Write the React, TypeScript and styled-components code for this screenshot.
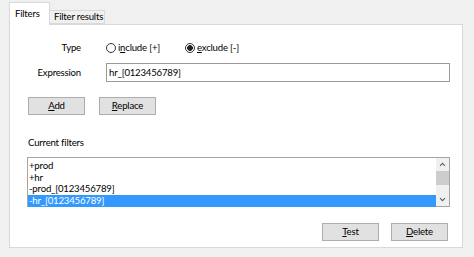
import React from 'react'
import styled, { createGlobalStyle } from 'styled-components'

const GlobalStyle = createGlobalStyle`
  html, body {
    margin: 0;
    padding: 0;
    background: #f0f0f0;
  }
  body {
    font-family: Lato, 'Noto Sans', sans-serif;
    font-size: 9.6px;
    letter-spacing: -0.2px;
    color: #000;
  }
`

const filters = ['+prod', '+hr', '-prod_[0123456789]', '-hr_[0123456789]']

const Chevron = ({ down }: { down?: boolean }) => (
  <svg width="7" height="5" viewBox="0 0 7 5">
    <path
      d={down ? 'M1 1.2 L3.5 3.7 L6 1.2' : 'M1 3.8 L3.5 1.3 L6 3.8'}
      fill="none"
      stroke="#606060"
      strokeWidth="1.1"
    />
  </svg>
)

const App = () => {
  return (
    <Window>
      <GlobalStyle />
      <TabStrip>
        <Tab $active>Filters</Tab>
        <Tab>Filter results</Tab>
      </TabStrip>
      <Panel>
        <Form>
          <Label>Type</Label>
          <RadioRow>
            <Radio>
              <RadioDot />
              <span>
                i<u>n</u>clude [+]
              </span>
            </Radio>
            <Radio>
              <RadioDot $checked />
              <span>
                <u>e</u>xclude [-]
              </span>
            </Radio>
          </RadioRow>
          <Label>Expression</Label>
          <TextInput defaultValue="hr_[0123456789]" />
        </Form>

        <ButtonRow>
          <Button>
            <u>A</u>dd
          </Button>
          <Button>
            <u>R</u>eplace
          </Button>
        </ButtonRow>

        <SectionLabel>Current filters</SectionLabel>
        <ListBox>
          <Items>
            {filters.map((f, i) => (
              <Item key={f} $selected={i === filters.length - 1}>
                {f}
              </Item>
            ))}
          </Items>
          <ScrollBar>
            <Arrow>
              <Chevron />
            </Arrow>
            <Thumb />
            <Track />
            <Arrow>
              <Chevron down />
            </Arrow>
          </ScrollBar>
        </ListBox>

        <FooterRow>
          <Button>
            <u>T</u>est
          </Button>
          <Button>
            <u>D</u>elete
          </Button>
        </FooterRow>
      </Panel>
    </Window>
  )
}

export default App

const Window = styled.div`
  width: 474px;
  height: 257px;
  box-sizing: border-box;
  padding: 3px 11px 9px 9px;
  display: flex;
  flex-direction: column;
`

const TabStrip = styled.div`
  display: flex;
  align-items: flex-end;
  height: 22px;
  position: relative;
  z-index: 1;
  margin-bottom: -1px;
`

const Tab = styled.div<{ $active?: boolean }>`
  box-sizing: border-box;
  white-space: nowrap;
  height: ${({ $active }) => ($active ? '23px' : '14px')};
  width: ${({ $active }) => ($active ? '41px' : '55px')};
  padding: ${({ $active }) => ($active ? '5px 0 0 5px' : '0 0 0 4px')};
  background: ${({ $active }) => ($active ? '#fff' : '#f0f0f0')};
  border: 1px solid #d9d9d9;
  border-bottom: ${({ $active }) => ($active ? 'none' : '1px solid #d9d9d9')};
  border-left: ${({ $active }) => ($active ? '1px solid #d9d9d9' : 'none')};
  display: flex;
  align-items: ${({ $active }) => ($active ? 'flex-start' : 'center')};
  line-height: 12px;
  margin-bottom: ${({ $active }) => ($active ? '0' : '1px')};
`

const Panel = styled.div`
  flex: 1;
  background: #fff;
  border: 1px solid #d9d9d9;
  padding: 17px 12px 6px 18px;
  display: flex;
  flex-direction: column;
`

const Form = styled.div`
  display: grid;
  grid-template-columns: 53px 1fr;
  column-gap: 25px;
  row-gap: 9px;
  align-items: center;
`

const Label = styled.div`
  text-align: right;
  line-height: 12px;
`

const RadioRow = styled.div`
  display: flex;
  gap: 25px;
  height: 12px;
  align-items: center;
`

const Radio = styled.label`
  display: flex;
  align-items: center;
  gap: 2px;
  line-height: 12px;
`

const RadioDot = styled.span<{ $checked?: boolean }>`
  width: 10px;
  height: 10px;
  box-sizing: border-box;
  border: 1px solid #333;
  border-radius: 50%;
  background: ${({ $checked }) =>
    $checked ? 'radial-gradient(circle, #222 0 2.6px, #fff 3.1px)' : '#fff'};
`

const TextInput = styled.input`
  box-sizing: border-box;
  height: 19px;
  width: 344px;
  border: 1px solid #9a9a9a;
  padding: 0 2px;
  font: inherit;
  letter-spacing: inherit;
  outline: none;
`

const ButtonRow = styled.div`
  display: flex;
  gap: 14px;
  margin-top: 15px;
`

const Button = styled.button`
  box-sizing: border-box;
  width: 57px;
  height: 18px;
  padding: 0;
  background: #e1e1e1;
  border: 1px solid #adadad;
  font: inherit;
  letter-spacing: inherit;
  color: #000;
  line-height: 14px;
`

const SectionLabel = styled.div`
  margin-top: 22px;
  line-height: 12px;
`

const ListBox = styled.div`
  margin-top: 8px;
  margin-left: -1px;
  height: 50px;
  box-sizing: border-box;
  border: 1px solid #a5a5a5;
  display: flex;
`

const Items = styled.div`
  flex: 1;
  padding-top: 2px;
`

const Item = styled.div<{ $selected?: boolean }>`
  height: 11.7px;
  line-height: 11.7px;
  padding-left: 1px;
  background: ${({ $selected }) => ($selected ? '#3399ff' : 'transparent')};
  color: ${({ $selected }) => ($selected ? '#fff' : '#000')};
`

const ScrollBar = styled.div`
  width: 13px;
  background: #f0f0f0;
  display: flex;
  flex-direction: column;
  align-items: center;
`

const Arrow = styled.div`
  height: 13px;
  display: flex;
  align-items: center;
  justify-content: center;
`

const Thumb = styled.div`
  width: 13px;
  height: 14px;
  background: #cdcdcd;
`

const Track = styled.div`
  flex: 1;
`

const FooterRow = styled.div`
  display: flex;
  justify-content: flex-end;
  gap: 12px;
  margin-top: auto;
  padding-right: 2px;
`
